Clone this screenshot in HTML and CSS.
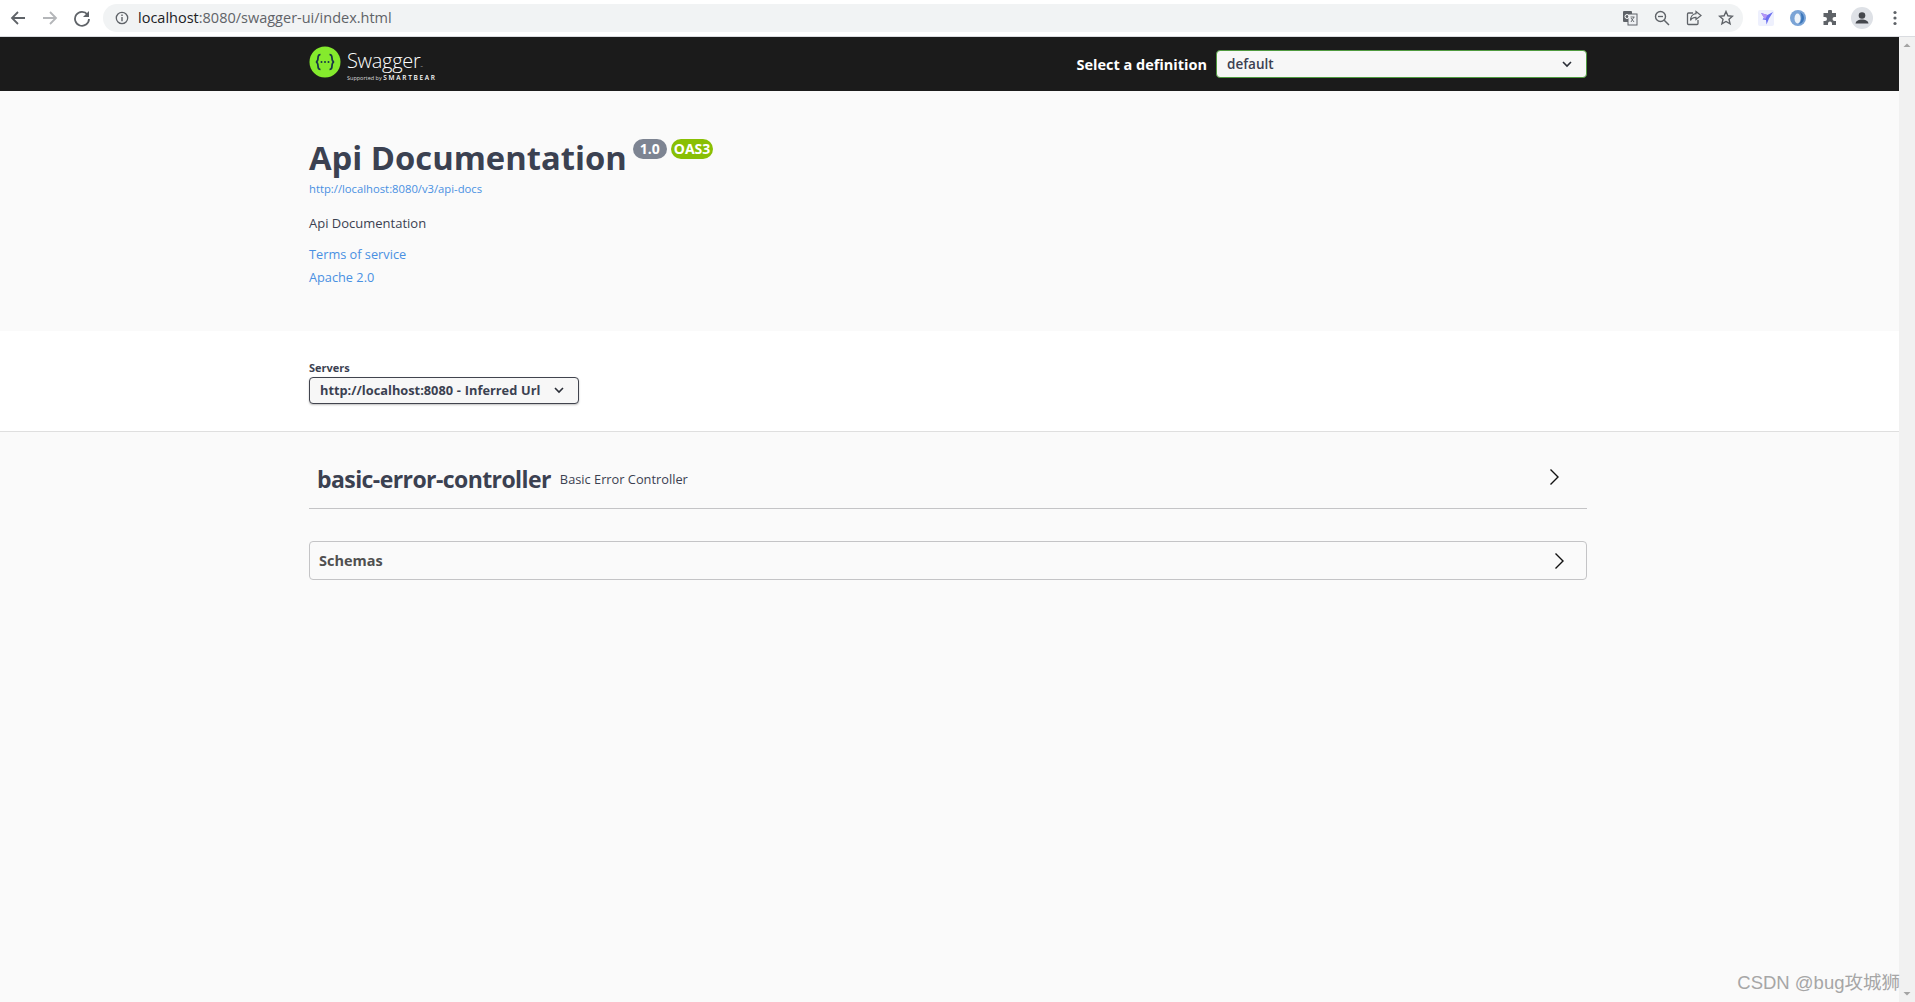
FILE: index.html
```html
<!DOCTYPE html>
<html lang="en">
<head>
<meta charset="utf-8">
<title>Swagger UI</title>
<link rel="stylesheet" href="styles.css">
</head>
<body>
<div class="chrome">
  <svg class="nav-icon" width="18" height="18" viewBox="0 0 18 18"><path d="M16 9H3.500M9 3L3 9l6 6" fill="none" stroke="#5f6368" stroke-width="1.800"/></svg>
  <svg class="nav-icon" width="18" height="18" viewBox="0 0 18 18"><path d="M2 9h12.500M9 3l6 6-6 6" fill="none" stroke="#b4b6b9" stroke-width="1.800"/></svg>
  <svg class="nav-icon" width="18" height="18" viewBox="0 0 18 18"><path d="M14.500 5.500A7 7 0 1 0 16 10" fill="none" stroke="#5f6368" stroke-width="1.800"/><path d="M16 2v6h-6z" fill="#5f6368"/></svg>
  <div class="omnibox">
    <svg class="info-icon" width="14" height="14" viewBox="0 0 14 14"><circle cx="7" cy="7" r="5.700" fill="none" stroke="#5f6368" stroke-width="1.300"/><path d="M7 6v4.200M7 3.600v1.300" stroke="#5f6368" stroke-width="1.400"/></svg>
    <span class="url"><span class="url-host">localhost</span>:8080/swagger-ui/index.html</span>
    <div class="omni-actions">
      <svg width="16" height="16" viewBox="0 0 16 16"><rect x="1" y="1" width="9" height="11" rx="1" fill="#5f6368"/><rect x="6" y="4" width="9" height="11" fill="#eef0f3" stroke="#5f6368"/><path d="M8.500 7h4M9 12l3-5M9 8l3 4" stroke="#5f6368" fill="none" stroke-width=".9"/><circle cx="5" cy="6.500" r="2" fill="none" stroke="#fff"/></svg>
      <svg width="16" height="16" viewBox="0 0 16 16"><circle cx="6.500" cy="6.500" r="5" fill="none" stroke="#5f6368" stroke-width="1.400"/><path d="M10.200 10.200L15 15" stroke="#5f6368" stroke-width="1.500"/><path d="M4 6.500h5" stroke="#5f6368" stroke-width="1.300"/></svg>
      <svg width="16" height="16" viewBox="0 0 16 16"><path d="M7 3H2.500A1 1 0 0 0 1.500 4v9.500a1 1 0 0 0 1 1H11a1 1 0 0 0 1-1V10" fill="none" stroke="#5f6368" stroke-width="1.300"/><path d="M10 1.500L15 5.500 10 9.500V7.300C7.500 7.300 5.500 8 4.500 10.500 4.500 7 6.500 4 10 3.700z" fill="none" stroke="#5f6368" stroke-width="1.200"/></svg>
      <svg width="16" height="16" viewBox="0 0 16 16"><path d="M8 1.500l1.900 4.300 4.600.4-3.500 3.100 1.100 4.600L8 11.500l-4.100 2.400L5 9.300 1.500 6.200l4.600-.4z" fill="none" stroke="#5f6368" stroke-width="1.400"/></svg>
    </div>
  </div>
  <div class="ext-icons">
    <svg width="16" height="16" viewBox="0 0 16 16"><rect width="16" height="16" rx="2" fill="#eef0fd"/><path d="M15 2L9.500 5 3 3l3 4.500L4.500 9.500 8 10l.5 4.500 2.500-6z" fill="#6b6ff0"/><path d="M3 3l6.500 2L7 9.500z" fill="#b494f5"/></svg>
    <svg width="16" height="16" viewBox="0 0 16 16"><circle cx="8" cy="8" r="8" fill="#7ba4d6"/><ellipse cx="7.500" cy="8.500" rx="3" ry="5" fill="#eef3f9"/><path d="M10 2C12 5 12 11 9 14 12 13.500 14 11 14 8S12 3 10 2z" fill="#3b76ba"/></svg>
    <svg width="16" height="16" viewBox="0 0 16 16"><path d="M6 1.500a2 2 0 0 1 4 0V3h4v4h-1.500a2 2 0 0 0 0 4H14v4H10v-1.500a2 2 0 0 0-4 0V15H1.500v-4H3a2 2 0 0 0 0-4H1.500V3H6z" fill="#5f6368"/></svg>
    <svg class="avatar" width="22" height="22" viewBox="0 0 22 22"><circle cx="11" cy="11" r="11" fill="#dee1e6"/><circle cx="11" cy="8.500" r="3.300" fill="#44474c"/><path d="M4.500 16.500c.5-3 3.500-4 6.500-4s6 1 6.500 4z" fill="#44474c"/></svg>
    <svg class="dots" width="6" height="16" viewBox="0 0 6 16"><circle cx="3" cy="2.500" r="1.600" fill="#5f6368"/><circle cx="3" cy="8" r="1.600" fill="#5f6368"/><circle cx="3" cy="13.500" r="1.600" fill="#5f6368"/></svg>
  </div>
</div>
<div class="viewport">
  <div class="page">
    <header class="topbar">
      <div class="wrap topbar-inner">
        <div class="logo">
          <svg width="32" height="32" viewBox="0 0 32 32"><circle cx="16" cy="16" r="15.500" fill="#85ea2d"/><path d="M11.500 8.500c-2.500 0-2.500 1.500-2.500 3.500s0 3.500-2 4c2 .5 2 2 2 4s0 3.500 2.500 3.500M20.500 8.500c2.500 0 2.500 1.500 2.500 3.500s0 3.500 2 4c-2 .5-2 2-2 4s0 3.500-2.500 3.500" fill="none" stroke="#173647" stroke-width="1.700"/><circle cx="12.500" cy="16" r="1" fill="#173647"/><circle cx="16" cy="16" r="1" fill="#173647"/><circle cx="19.500" cy="16" r="1" fill="#173647"/></svg>
          <div class="logo-text">
            <div class="logo-name">Swagger<span class="logo-tm">™</span></div>
            <div class="logo-sub"><span class="logo-sup">Supported by</span> <span class="logo-bear">SMARTBEAR</span></div>
          </div>
        </div>
        <div class="definition">
          <span class="definition-label">Select a definition</span>
          <div class="definition-select">
            <span>default</span>
            <svg width="12" height="8" viewBox="0 0 12 8"><path d="M2 2l4 4 4-4" fill="none" stroke="#2b2f38" stroke-width="1.600"/></svg>
          </div>
        </div>
      </div>
    </header>
    <section class="info">
      <div class="wrap">
        <div class="title-row">
          <h1 class="title">Api Documentation</h1>
          <span class="badge badge-version">1.0</span>
          <span class="badge badge-oas">OAS3</span>
        </div>
        <a class="spec-link">http://localhost:8080/v3/api-docs</a>
        <p class="description">Api Documentation</p>
        <a class="info-link terms">Terms of service</a>
        <a class="info-link">Apache 2.0</a>
      </div>
    </section>
    <section class="servers">
      <div class="wrap">
        <div class="servers-label">Servers</div>
        <div class="servers-select">
          <span>http://localhost:8080 - Inferred Url</span>
          <svg width="12" height="8" viewBox="0 0 12 8"><path d="M2 2l4 4 4-4" fill="none" stroke="#2b2f38" stroke-width="1.600"/></svg>
        </div>
      </div>
    </section>
    <section class="content">
      <div class="wrap">
        <div class="tag">
          <span class="tag-name">basic-error-controller</span>
          <span class="tag-desc">Basic Error Controller</span>
          <svg class="tag-arrow" width="20" height="20" viewBox="0 0 20 20"><path d="M6.500 2.500L14 10l-7.500 7.500" fill="none" stroke="#111" stroke-width="1.400"/></svg>
        </div>
        <div class="schemas">
          <span class="schemas-title">Schemas</span>
          <svg width="20" height="20" viewBox="0 0 20 20"><path d="M6.500 2.500L14 10l-7.500 7.500" fill="none" stroke="#111" stroke-width="1.400"/></svg>
        </div>
      </div>
    </section>
    <div class="watermark">CSDN @bug攻城狮</div>
  </div>
  <div class="scrollbar">
    <svg width="16" height="16" viewBox="0 0 16 16"><path d="M4.500 10L8 6.500 11.500 10z" fill="#a3a3a3"/></svg>
    <svg width="16" height="16" viewBox="0 0 16 16"><path d="M4.500 6L8 9.500 11.500 6z" fill="#a3a3a3"/></svg>
  </div>
</div>
</body>
</html>
```
FILE: styles.css
```css
* { box-sizing: border-box; }
html, body { margin: 0; height: 100%; overflow: hidden; }
body { display: flex; flex-direction: column; font-family: "Open Sans", "Noto Sans", sans-serif; color: #3b4151; background: #fff; }

.chrome { height: 37px; flex: none; display: flex; align-items: center; padding: 0 0 1px 9px; border-bottom: 1px solid #dadce0; background: #fff; }
.nav-icon { margin-right: 14px; flex: none; }
.omnibox { flex: none; width: 1640px; height: 28px; margin-left: -2px; padding: 0 0 0 12px; display: flex; align-items: center; border-radius: 14px; background: #f1f3f4; }
.info-icon { flex: none; }
.url { margin-left: 9px; font-size: 14.500px; color: #5f6368; }
.url-host { color: #202124; }
.omni-actions { margin-left: auto; padding-right: 9px; display: flex; gap: 16px; }
.ext-icons { margin-left: 15px; display: flex; align-items: center; gap: 16px; }
.ext-icons .avatar { margin: 0 -3px; }
.ext-icons .dots { margin-left: 6px; }

.viewport { flex: 1; min-height: 0; display: flex; }
.page { position: relative; flex: 1; min-width: 0; background: #fafafa; display: flex; flex-direction: column; }
.scrollbar { width: 16px; flex: none; background: #f1f1f1; display: flex; flex-direction: column; justify-content: space-between; }
.wrap { width: 1278px; margin-left: 309px; }

.topbar { height: 54px; flex: none; background: #1b1b1b; }
.topbar-inner { height: 100%; display: flex; align-items: center; justify-content: space-between; }
.logo { align-self: flex-start; display: flex; align-items: flex-start; gap: 6px; padding-top: 9px; color: #fff; }
.logo-text { display: flex; flex-direction: column; padding-top: 4px; }
.logo-name { font-size: 20px; line-height: 22px; letter-spacing: -.3px; font-weight: 300; }
.logo-tm { font-size: 3px; vertical-align: baseline; }
.logo-sub { font-size: 6.500px; line-height: 7px; margin-top: -4px; white-space: nowrap; }
.logo-sup { font-size: 5.500px; color: #ddd; }
.logo-bear { font-weight: 600; letter-spacing: 1.700px; }
.definition { display: flex; align-items: center; gap: 9px; }
.definition-label { font-size: 14.500px; font-weight: 700; color: #fff; }
.definition-select { width: 371px; height: 28px; padding: 0 13px 0 10px; display: flex; align-items: center; justify-content: space-between; font-size: 13.500px; font-weight: 600; background: #f7f7f7; border: 1.500px solid #4f9a3f; border-radius: 4px; }

.info { height: 240px; flex: none; padding-top: 45px; }
.title-row { display: flex; align-items: flex-start; }
.title { margin: 0; font-size: 32.750px; line-height: 44px; font-weight: 700; white-space: nowrap; }
.badge { height: 20px; margin-top: 3px; padding: 0 7px; border-radius: 10px; font-size: 14px; line-height: 20px; font-weight: 700; color: #fff; }
.badge-version { margin-left: 6px; background: #7d8492; }
.badge-oas { margin-left: 4px; padding: 0 3px; background: #89bf04; }
.spec-link { display: block; margin-top: 1px; font-size: 11.250px; line-height: 16px; color: #4990e2; }
.description { margin: 16px 0 0; font-size: 13px; line-height: 20px; }
.info-link { display: block; font-size: 12.750px; line-height: 23px; color: #4990e2; }
.terms { margin-top: 10px; }

.servers { height: 101px; flex: none; padding-top: 31px; background: #fff; border-bottom: 1px solid #dfdfdf; }
.servers-label { font-size: 11px; line-height: 12px; font-weight: 700; }
.servers-select { width: 270px; height: 27px; margin-top: 3px; padding: 0 13px 2px 10px; display: flex; align-items: center; justify-content: space-between; font-size: 12.800px; font-weight: 700; word-spacing: .5px; background: #f7f7f7; border: 1.500px solid #41444e; border-radius: 4px; box-shadow: 0 1px 2px rgba(0, 0, 0, .25); }

.tag { height: 63px; margin-top: 14px; padding: 3px 23px 0 8px; display: flex; align-items: center; border-bottom: 1px solid #c4c4c6; }
.tag-name { font-size: 23px; letter-spacing: -.58px; font-weight: 700; white-space: nowrap; }
.tag-desc { margin-left: 9px; font-size: 12.800px; }
.tag-arrow { margin-left: auto; margin-top: -4px; }
.schemas { height: 39px; margin-top: 32px; padding: 0 17px 0 9px; display: flex; align-items: center; justify-content: space-between; border: 1px solid #c4c4c6; border-radius: 4px; }
.schemas-title { font-size: 14.500px; font-weight: 700; color: #505050; margin-top: -1px; }

.watermark { position: absolute; right: -1px; bottom: 8px; font: 18.500px "Liberation Sans", "Noto Sans CJK SC", sans-serif; color: #a6a6a6; white-space: nowrap; }
```
